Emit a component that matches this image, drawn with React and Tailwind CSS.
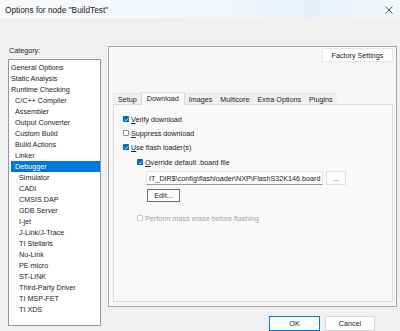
import React from "react";

const items = [
  ["General Options", 0],
  ["Static Analysis", 0],
  ["Runtime Checking", 0],
  ["C/C++ Compiler", 1],
  ["Assembler", 1],
  ["Output Converter", 1],
  ["Custom Build", 1],
  ["Build Actions", 1],
  ["Linker", 1],
  ["Debugger", 1, true],
  ["Simulator", 2],
  ["CADI", 2],
  ["CMSIS DAP", 2],
  ["GDB Server", 2],
  ["I-jet", 2],
  ["J-Link/J-Trace", 2],
  ["TI Stellaris", 2],
  ["Nu-Link", 2],
  ["PE micro", 2],
  ["ST-LINK", 2],
  ["Third-Party Driver", 2],
  ["TI MSP-FET", 2],
  ["TI XDS", 2],
];

function Check({ checked, disabled }) {
  if (checked) {
    return (
      <span className="w-[6px] h-[6px] rounded-[1px] bg-[#0067c0] flex items-center justify-center shrink-0">
        <svg width="5" height="5" viewBox="0 0 10 10">
          <path d="M1.5 5.2 L4 7.6 L8.6 2.4" fill="none" stroke="#fff" strokeWidth="1.6" />
        </svg>
      </span>
    );
  }
  return (
    <span
      className={
        "w-[6px] h-[6px] rounded-[1px] border bg-white shrink-0 " +
        (disabled ? "border-[#c8c8c8]" : "border-[#8a8a8a]")
      }
    />
  );
}

function Row({ checked, disabled, u, rest, className = "" }) {
  return (
    <div className={"h-[14px] flex items-center gap-[2px] " + className}>
      <Check checked={checked} disabled={disabled} />
      <span className={disabled ? "text-[#a3a3a3]" : ""}>
        {u ? <span className="underline underline-offset-[1px]">{u}</span> : null}
        {rest}
      </span>
    </div>
  );
}

export default function App() {
  return (
    <div className="w-[400px] h-[331px] overflow-hidden bg-[#f0f0f0] text-[#222222] font-['Liberation_Sans',Arial,sans-serif] text-[7.2px] leading-[9px]">
      {/* Title bar */}
      <div className="h-[19px] flex items-center justify-between pl-[5px] pr-[7px] bg-[linear-gradient(90deg,#f7f9fb_0%,#f4f7fa_55%,#e6eff8_78%,#eef4f9_88%,#f4f7fa_100%)]">
        <span className="text-[8.3px] leading-[10px]">Options for node "BuildTest"</span>
        <svg width="8" height="8" viewBox="0 0 8 8">
          <path d="M0.5 0.5 L7.5 7.5 M7.5 0.5 L0.5 7.5" stroke="#2b2b2b" strokeWidth="0.8" />
        </svg>
      </div>

      {/* Body */}
      <div className="flex pt-[27px]">
        {/* Left column */}
        <div className="pl-[8px] w-[101px] flex flex-col">
          <div className="h-[9px] pl-[1px]">Category:</div>
          <div className="mt-[4px] h-[267px] border border-[#8f96a0] bg-white pt-[2px] pl-[2px]">
            {items.map(([label, level, sel]) => (
              <div
                key={label}
                className={
                  "h-[11px] leading-[11px] whitespace-nowrap " +
                  (sel ? "bg-[#0078d7] text-white " : "") +
                  (level === 0 ? "pl-0" : level === 1 ? "pl-[4px]" : "pl-[8px]")
                }
              >
                {label}
              </div>
            ))}
          </div>
        </div>

        {/* Right column */}
        <div className="ml-[7px] w-[289px] flex flex-col">
          <div className="h-[261px] border border-[#a6a6a6] bg-[#f7f7f7] shadow-[inset_1px_1px_0_#ffffff] flex flex-col">
            <div className="flex justify-end pt-[1px] pr-[3px]">
              <div className="w-[71px] h-[14px] bg-white border border-[#e6e6e6] flex items-center justify-center">
                Factory Settings
              </div>
            </div>

            <div className="mt-[29px] ml-[4px] mr-[3px] flex flex-col">
              {/* Tabs */}
              <div className="h-[13px] flex items-end">
                <div className="h-[11px] pl-[5px] pr-[4px] flex items-center bg-[#f0f0f0] border-t border-[#e4e4e4]">Setup</div>
                <div className="h-[13px] px-[5px] flex items-center bg-[#f9f9f9] border-t border-l border-r border-[#dcdcdc] -mb-[1px] relative z-10 pb-[1px]">Download</div>
                <div className="h-[11px] px-[4px] flex items-center bg-[#f0f0f0] border-t border-[#e4e4e4]">Images</div>
                <div className="h-[11px] px-[4px] flex items-center bg-[#f0f0f0] border-t border-[#e4e4e4]">Multicore</div>
                <div className="h-[11px] px-[4px] flex items-center bg-[#f0f0f0] border-t border-[#e4e4e4]">Extra Options</div>
                <div className="h-[11px] px-[4px] flex items-center bg-[#f0f0f0] border-t border-[#e4e4e4]">Plugins</div>
              </div>

              {/* Tab content */}
              <div className="h-[198px] border border-[#dcdcdc] bg-[#f9f9f9] pt-[7px] pl-[9px] flex flex-col">
                <Row checked u="V" rest="erify download" />
                <Row u="S" rest="uppress download" />
                <Row checked u="U" rest="se flash loader(s)" />
                <Row checked u="O" rest="verride default .board file" className="ml-[14px] mt-[1px]" />
                <div className="ml-[23px] mt-[2px] flex">
                  <div className="w-[177px] h-[14px] bg-white border border-[#e3e3e3] border-b-[#9a9a9a] flex items-center pl-[2px] overflow-hidden whitespace-nowrap">
                    IT_DIR$\config\flashloader\NXP\FlashS32K146.board
                  </div>
                  <div className="ml-[3px] w-[20px] h-[14px] bg-[#fdfdfd] border border-[#e0e0e0] flex items-center justify-center text-[#555]">
                    ...
                  </div>
                </div>
                <div className="ml-[24px] mt-[4px] w-[33px] h-[13px] bg-[#fdfdfd] border border-[#6f6f6f] shadow-[inset_0_0_0_1px_#ffffff] flex items-center justify-center">
                  Edit...
                </div>
                <Row disabled rest="Perform mass erase before flashing" className="ml-[14px] mt-[9px]" />
              </div>
            </div>
          </div>

          <div className="mt-[9px] flex justify-end gap-[5px] pr-[22px]">
            <div className="w-[51px] h-[15px] bg-[#fdfdfd] border border-[#0078d4] flex items-center justify-center">OK</div>
            <div className="w-[50px] h-[15px] bg-[#fdfdfd] border border-[#d6d6d6] flex items-center justify-center">Cancel</div>
          </div>
        </div>
      </div>
    </div>
  );
}
